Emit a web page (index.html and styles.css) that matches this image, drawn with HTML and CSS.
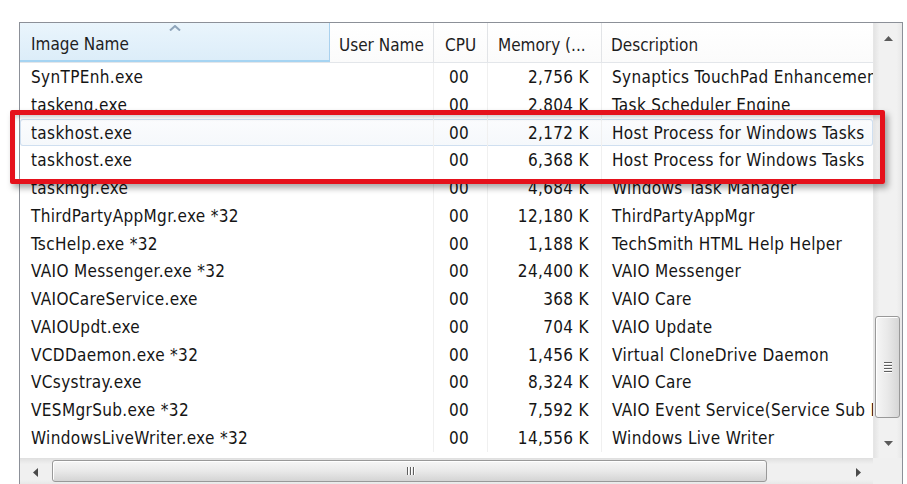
FILE: index.html
```html
<!DOCTYPE html>
<html lang="en">
<head>
    <meta charset="UTF-8">
    <title>Windows Task Manager - Processes</title>
    <link rel="stylesheet" href="styles.css">
</head>
<body>

    <div class="taskview">
        <div class="list">
            <div class="list-header cols">
                <div class="hcell sorted name-col">
                    <svg class="sort-arrow" width="12" height="6" viewBox="0 0 12 6"><path d="M1 5.5 L6 1 L11 5.5" fill="none" stroke="#8ea4ba" stroke-width="2"/></svg>
                    Image Name
                </div>
                <div class="hcell user-col">User Name</div>
                <div class="hcell cpu-col">CPU</div>
                <div class="hcell mem-col">Memory (...</div>
                <div class="hcell desc-col">Description</div>
            </div>

            <div class="rows">
                <div class="row cols"><div class="cell">SynTPEnh.exe</div><div class="cell"></div><div class="cell cpu">00</div><div class="cell mem">2,756 K</div><div class="cell desc">Synaptics TouchPad Enhancements</div></div>
                <div class="row cols"><div class="cell">taskeng.exe</div><div class="cell"></div><div class="cell cpu">00</div><div class="cell mem">2,804 K</div><div class="cell desc">Task Scheduler Engine</div></div>
                <div class="row cols hover"><div class="cell">taskhost.exe</div><div class="cell"></div><div class="cell cpu">00</div><div class="cell mem">2,172 K</div><div class="cell desc">Host Process for Windows Tasks</div></div>
                <div class="row cols"><div class="cell">taskhost.exe</div><div class="cell"></div><div class="cell cpu">00</div><div class="cell mem">6,368 K</div><div class="cell desc">Host Process for Windows Tasks</div></div>
                <div class="row cols"><div class="cell">taskmgr.exe</div><div class="cell"></div><div class="cell cpu">00</div><div class="cell mem">4,684 K</div><div class="cell desc">Windows Task Manager</div></div>
                <div class="row cols"><div class="cell">ThirdPartyAppMgr.exe *32</div><div class="cell"></div><div class="cell cpu">00</div><div class="cell mem">12,180 K</div><div class="cell desc">ThirdPartyAppMgr</div></div>
                <div class="row cols"><div class="cell">TscHelp.exe *32</div><div class="cell"></div><div class="cell cpu">00</div><div class="cell mem">1,188 K</div><div class="cell desc">TechSmith HTML Help Helper</div></div>
                <div class="row cols"><div class="cell">VAIO Messenger.exe *32</div><div class="cell"></div><div class="cell cpu">00</div><div class="cell mem">24,400 K</div><div class="cell desc">VAIO Messenger</div></div>
                <div class="row cols"><div class="cell">VAIOCareService.exe</div><div class="cell"></div><div class="cell cpu">00</div><div class="cell mem">368 K</div><div class="cell desc">VAIO Care</div></div>
                <div class="row cols"><div class="cell">VAIOUpdt.exe</div><div class="cell"></div><div class="cell cpu">00</div><div class="cell mem">704 K</div><div class="cell desc">VAIO Update</div></div>
                <div class="row cols"><div class="cell">VCDDaemon.exe *32</div><div class="cell"></div><div class="cell cpu">00</div><div class="cell mem">1,456 K</div><div class="cell desc">Virtual CloneDrive Daemon</div></div>
                <div class="row cols"><div class="cell">VCsystray.exe</div><div class="cell"></div><div class="cell cpu">00</div><div class="cell mem">8,324 K</div><div class="cell desc">VAIO Care</div></div>
                <div class="row cols"><div class="cell">VESMgrSub.exe *32</div><div class="cell"></div><div class="cell cpu">00</div><div class="cell mem">7,592 K</div><div class="cell desc">VAIO Event Service(Service Sub Module)</div></div>
                <div class="row cols"><div class="cell">WindowsLiveWriter.exe *32</div><div class="cell"></div><div class="cell cpu">00</div><div class="cell mem">14,556 K</div><div class="cell desc">Windows Live Writer</div></div>
            </div>
        </div>

        <!-- vertical scrollbar -->
        <div class="vscroll">
            <div class="sbtn">
                <svg width="9" height="5" viewBox="0 0 9 5"><path d="M0 5 L4.5 0 L9 5Z" fill="#5a5a5a"/></svg>
            </div>
            <div class="vtrack">
                <div class="vthumb">
                    <div class="grip-h"></div>
                    <div class="grip-h"></div>
                    <div class="grip-h"></div>
                    <div class="grip-h"></div>
                </div>
            </div>
            <div class="sbtn">
                <svg width="9" height="5" viewBox="0 0 9 5"><path d="M0 0 L4.5 5 L9 0Z" fill="#5a5a5a"/></svg>
            </div>
        </div>

        <!-- horizontal scrollbar -->
        <div class="hscroll">
            <div class="hbtn">
                <svg width="5" height="9" viewBox="0 0 5 9"><path d="M5 0 L0 4.5 L5 9Z" fill="#4a4a4a"/></svg>
            </div>
            <div class="htrack">
                <div class="hthumb">
                    <div class="grip-v"></div>
                    <div class="grip-v"></div>
                    <div class="grip-v"></div>
                </div>
            </div>
            <div class="hbtn">
                <svg width="5" height="9" viewBox="0 0 5 9"><path d="M0 0 L5 4.5 L0 9Z" fill="#4a4a4a"/></svg>
            </div>
        </div>
        <div class="corner"></div>
    </div>

    <!-- callout drawn over the two taskhost rows -->
    <div class="callout"></div>

</body>
</html>
```

FILE: styles.css
```css
* {
    box-sizing: border-box;
}

body {
    margin: 0;
    width: 907px;
    height: 484px;
    overflow: hidden;
    position: relative;
    background-color: #ffffff;
    font-family: 'DejaVu Sans Condensed', 'Liberation Sans', Arial, sans-serif;
    font-stretch: condensed;
    font-size: 17px;
    color: #151515;
}

.taskview {
    margin: 22px 0 0 19px;
    width: 884px;
    border: 1px solid #8c9098;
    border-bottom: none;
    display: grid;
    grid-template-columns: 853px 29px;
    grid-template-rows: 435px 27px;
}

.cols {
    display: grid;
    grid-template-columns: 310px 104px 54px 114px 271px;
}

/* header */

.list {
    overflow: hidden;
}

.list-header {
    height: 40px;
    border-bottom: 1px solid #e3e6ea;
    background: linear-gradient(#ffffff, #fbfbfb);
}

.hcell {
    position: relative;
    display: flex;
    align-items: center;
    padding-top: 4px;
    border-right: 1px solid #e2e4e7;
    white-space: nowrap;
    color: #1e1e1e;
}

.hcell.sorted {
    background: linear-gradient(#eaf5fc, #dcedf9);
    border-right: 1px solid #a9d1ee;
    border-bottom: 2px solid #a6d4f2;
}

.sort-arrow {
    position: absolute;
    left: 149px;
    top: 2px;
}

.name-col { padding-left: 11px; }
.user-col { padding-left: 9px; }
.cpu-col { padding-left: 11px; }
.mem-col { padding-left: 10px; }
.desc-col { padding-left: 9px; border-right: none; }

/* rows */

.row {
    height: 27.75px;
    line-height: 28.5px;
}

.cell {
    padding-left: 11px;
    white-space: nowrap;
    overflow: hidden;
    letter-spacing: 0.35px;
}

.cell:nth-child(2),
.cell.cpu,
.cell.mem {
    border-right: 1px solid #f0f0f0;
}

.cell.cpu {
    padding-left: 15px;
}

.cell.mem {
    text-align: right;
    padding-right: 12px;
}

.cell.desc {
    padding-left: 10px;
}

.row.hover {
    border-radius: 3px;
    background: linear-gradient(#fbfcfe, #f5f8fb);
    box-shadow: inset 0 0 0 1px #cfdff0;
}

/* scrollbars */

.vscroll {
    display: flex;
    flex-direction: column;
    background: linear-gradient(90deg, #e4e4e4, #f1f1f1 20%, #f1f1f1 80%, #e8e8e8);
    border-left: 1px solid #e6e6e6;
}

.sbtn {
    height: 30px;
    display: flex;
    align-items: center;
    justify-content: center;
}

.vtrack {
    flex-grow: 1;
    padding: 263px 0 0 1px;
}

.vthumb {
    width: 25px;
    height: 102px;
    border: 1px solid #999999;
    border-radius: 3px;
    background: linear-gradient(90deg, #f6f6f6, #e9e9e9 50%, #d6d6d6);
    box-shadow: inset 1px 1px 0 #ffffff;
    display: flex;
    flex-direction: column;
    align-items: center;
    justify-content: center;
    gap: 2px;
}

.grip-h {
    width: 8px;
    height: 1px;
    background-color: #5f5f5f;
    box-shadow: 0 1px 0 #ffffff;
}

.hscroll {
    display: flex;
    background: linear-gradient(#e2e2e2, #f0f0f0 20%, #f0f0f0 80%, #e6e6e6);
    border-top: 1px solid #e0e0e0;
}

.hbtn {
    width: 30px;
    display: flex;
    align-items: center;
    justify-content: center;
}

.htrack {
    flex-grow: 1;
    padding: 1px 0 3px 2px;
}

.hthumb {
    width: 715px;
    height: 100%;
    border: 1px solid #999999;
    border-radius: 3px;
    background: linear-gradient(#f6f6f6, #e9e9e9 50%, #d4d4d4);
    box-shadow: inset 1px 1px 0 #ffffff;
    display: flex;
    align-items: center;
    justify-content: center;
    gap: 2px;
    padding-left: 2px;
}

.grip-v {
    width: 1px;
    height: 8px;
    background-color: #5f5f5f;
    box-shadow: 1px 0 0 #ffffff;
}

.corner {
    background-color: #f0f0f0;
}

/* red highlight box */

.callout {
    position: absolute;
    left: 10px;
    top: 110px;
    width: 875px;
    height: 74px;
    border: 5px solid #e5111b;
    border-radius: 2px;
    box-shadow: 3px 4px 6px rgba(0, 0, 0, 0.35), inset 0 4px 5px -2px rgba(0, 0, 0, 0.22);
    pointer-events: none;
}
```
